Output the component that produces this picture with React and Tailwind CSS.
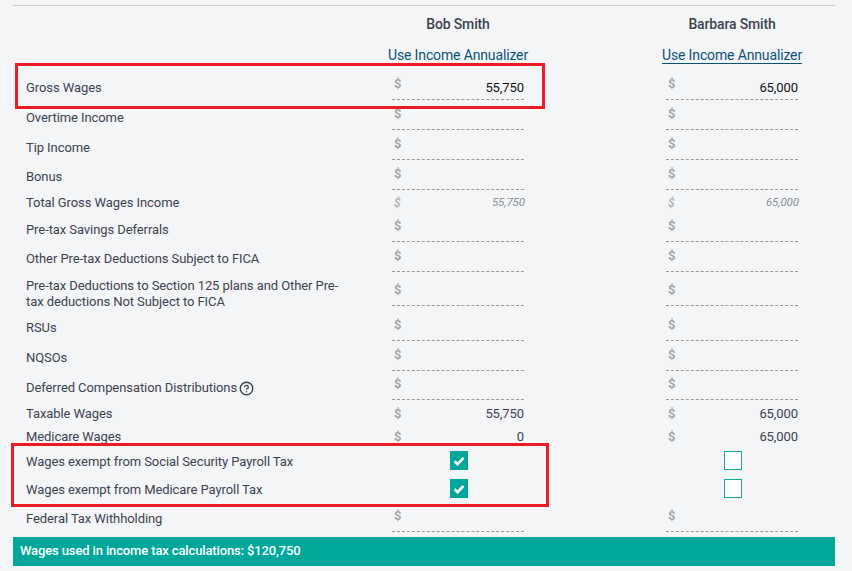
import { CircleHelp } from "lucide-react";

const rows = [
  { label: "Gross Wages", h: "h-[30px]", t: "pt-[6px]", a: "55,750", b: "65,000", kind: "input" },
  { label: "Overtime Income", h: "h-[30px]", t: "pt-[6px]", kind: "input" },
  { label: "Tip Income", h: "h-[30px]", t: "pt-[6px]", kind: "input" },
  { label: "Bonus", h: "h-[30px]", t: "pt-[4px]", kind: "input" },
  { label: "Total Gross Wages Income", h: "h-[24px]", t: "pt-[2px]", a: "55,750", b: "65,000", kind: "total" },
  { label: "Pre-tax Savings Deferrals", h: "h-[28px]", t: "pt-[4px]", kind: "input" },
  { label: "Other Pre-tax Deductions Subject to FICA", h: "h-[30px]", t: "pt-[4px]", kind: "input" },
  { label: "Pre-tax Deductions to Section 125 plans and Other Pre-tax deductions Not Subject to FICA", h: "h-[34px]", t: "pt-[10px]", kind: "input" },
  { label: "RSUs", h: "h-[35px]", t: "pt-[9px]", kind: "input" },
  { label: "NQSOs", h: "h-[30px]", t: "pt-[4px]", kind: "input" },
  { label: "Deferred Compensation Distributions", h: "h-[29px]", t: "pt-[5px]", kind: "input", help: true },
  { label: "Taxable Wages", h: "h-[25px]", t: "pt-[2px]", a: "55,750", b: "65,000", kind: "plain" },
  { label: "Medicare Wages", h: "h-[22px]", t: "pt-[2px]", a: "0", b: "65,000", kind: "plain" },
  { label: "Wages exempt from Social Security Payroll Tax", h: "h-[28px]", t: "pt-[2px]", kind: "check", a: true, b: false },
  { label: "Wages exempt from Medicare Payroll Tax", h: "h-[28px]", t: "pt-[2px]", kind: "check", a: true, b: false },
  { label: "Federal Tax Withholding", h: "h-[29px]", t: "pt-[3px]", kind: "input" },
];

function Cell({ kind, value }) {
  if (kind === "check") {
    return (
      <div className="w-[132px] flex justify-center items-start pt-[4px] pl-[2px]">
        {value ? (
          <div className="w-[18px] h-[19px] bg-[#00a79a] flex items-center justify-center">
            <svg width="12" height="10" viewBox="0 0 12 10">
              <path d="M1.5 5.2 4.6 8.2 10.5 1.8" fill="none" stroke="#fff" strokeWidth="2.6" />
            </svg>
          </div>
        ) : (
          <div className="w-[18px] h-[19px] bg-white border-[1.5px] border-[#14a89b]" />
        )}
      </div>
    );
  }
  if (kind === "total") {
    return (
      <div className="w-[132px] flex items-center justify-between text-[11.5px] italic text-[#8f9195] pl-[2px] pt-[2px]">
        <span className="font-bold text-[#b4b6b9] text-[12px]">$</span>
        <span className="relative left-[1px]">{value}</span>
      </div>
    );
  }
  if (kind === "plain") {
    return (
      <div className="w-[132px] flex items-center justify-between pl-[2px] pt-[2px]">
        <span className="text-[#a3a5a8] font-bold text-[13px]">$</span>
        <span>{value}</span>
      </div>
    );
  }
  return (
    <div className="w-[132px] self-end h-[26px] flex items-start justify-between pl-[2px] border-b border-dashed border-[#9a9a9a] leading-[18px]">
      <span className="mt-[1px] text-[13px] font-bold text-[#a3a5a8]">$</span>
      {value && <span className="mt-[5px] text-[#111111]">{value}</span>}
    </div>
  );
}

export default function App() {
  return (
    <div className="relative w-[852px] h-[571px] overflow-hidden bg-[#f4f5f7] font-['Roboto',sans-serif] text-[13px] text-[#3d4350] tracking-[-0.08px] pt-[5px] pl-[13px]">
      <div className="w-[822px] border-t border-[#c8c9cb]">
        <div className="flex h-[36px] items-center pt-[1px] text-[14px] tracking-[-0.15px] font-medium">
          <div className="w-[379px]" />
          <div className="w-[132px] flex justify-center">Bob Smith</div>
          <div className="w-[142px]" />
          <div className="w-[132px] flex justify-center">Barbara Smith</div>
        </div>
        <div className="flex h-[28px] items-start pt-[5px] text-[14px] tracking-[-0.14px] text-[#0a5377] leading-[16px]">
          <div className="w-[379px]" />
          <div className="w-[132px] flex justify-center whitespace-nowrap">Use Income Annualizer</div>
          <div className="w-[142px]" />
          <div className="w-[132px] flex justify-center whitespace-nowrap">
            <span className="border-b border-[#0a5377]">Use Income Annualizer</span>
          </div>
        </div>

        {rows.map((r) => (
          <div key={r.label} className={`flex ${r.h}`}>
            <div className={`w-[379px] pl-[13px] pr-[40px] leading-[16px] flex items-center ${r.t}`}>
              <span className="flex items-center flex-wrap">
                {r.help ? (
                  <>
                    {r.label}
                    <CircleHelp size={15} strokeWidth={2.2} className="ml-[2px]" />
                  </>
                ) : (
                  r.label
                )}
              </span>
            </div>
            <Cell kind={r.kind} value={r.a} />
            <div className="w-[142px]" />
            <Cell kind={r.kind} value={r.b} />
          </div>
        ))}

        <div className="h-[29px] mt-[5px] bg-[#00a79a] text-white font-medium tracking-[-0.13px] pl-[7px] pb-[2px] flex items-center">
          Wages used in income tax calculations: $120,750
        </div>
      </div>

      <div className="absolute left-[15px] top-[63px] w-[530px] h-[46px] border-[3px] border-[#ec1c24]" />
      <div className="absolute left-[11px] top-[443px] w-[538px] h-[64px] border-[3px] border-[#ec1c24]" />
    </div>
  );
}
